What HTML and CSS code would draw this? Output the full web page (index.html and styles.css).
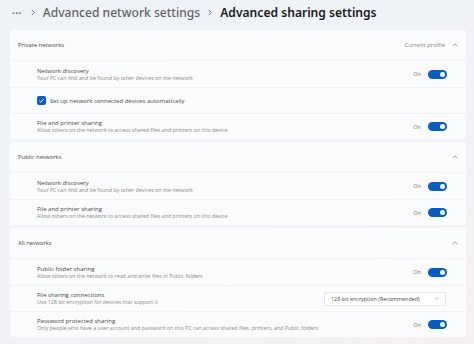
FILE: index.html
```html
<!DOCTYPE html>
<html lang="en">
<head>
    <meta charset="UTF-8">
    <meta name="viewport" content="width=device-width, initial-scale=1.0">
    <title>Advanced sharing settings</title>
    <link rel="stylesheet" href="styles.css">
</head>
<body>
    <header class="breadcrumb">
        <span class="more">···</span>
        <svg class="sep" viewBox="0 0 4 7"><path d="M0.8 0.8 L3.2 3.5 L0.8 6.2"/></svg>
        <span class="crumb">Advanced network settings</span>
        <svg class="sep" viewBox="0 0 4 7"><path d="M0.8 0.8 L3.2 3.5 L0.8 6.2"/></svg>
        <span class="crumb current">Advanced sharing settings</span>
    </header>

    <main class="groups">
        <section class="group">
            <div class="group-header">
                <span>Private networks</span>
                <span class="header-right">
                    <span class="profile">Current profile</span>
                    <svg class="chevron" viewBox="0 0 7 4"><path d="M0.7 3.3 L3.5 0.7 L6.3 3.3"/></svg>
                </span>
            </div>
            <div class="row tall">
                <div class="row-text">
                    <div class="title">Network discovery</div>
                    <div class="desc">Your PC can find and be found by other devices on the network</div>
                </div>
                <div class="switch"><span class="state">On</span><span class="toggle"></span></div>
            </div>
            <div class="row">
                <label class="check">
                    <span class="box"><svg viewBox="0 0 9 9"><path d="M2.2 4.6 L3.8 6.2 L6.9 2.9"/></svg></span>
                    <span>Set up network connected devices automatically</span>
                </label>
            </div>
            <div class="row">
                <div class="row-text">
                    <div class="title">File and printer sharing</div>
                    <div class="desc">Allow others on the network to access shared files and printers on this device</div>
                </div>
                <div class="switch"><span class="state">On</span><span class="toggle"></span></div>
            </div>
        </section>

        <section class="group">
            <div class="group-header">
                <span>Public networks</span>
                <span class="header-right">
                    <svg class="chevron" viewBox="0 0 7 4"><path d="M0.7 3.3 L3.5 0.7 L6.3 3.3"/></svg>
                </span>
            </div>
            <div class="row tall">
                <div class="row-text">
                    <div class="title">Network discovery</div>
                    <div class="desc">Your PC can find and be found by other devices on the network</div>
                </div>
                <div class="switch"><span class="state">On</span><span class="toggle"></span></div>
            </div>
            <div class="row">
                <div class="row-text">
                    <div class="title">File and printer sharing</div>
                    <div class="desc">Allow others on the network to access shared files and printers on this device</div>
                </div>
                <div class="switch"><span class="state">On</span><span class="toggle"></span></div>
            </div>
        </section>

        <section class="group">
            <div class="group-header">
                <span>All networks</span>
                <span class="header-right">
                    <svg class="chevron" viewBox="0 0 7 4"><path d="M0.7 3.3 L3.5 0.7 L6.3 3.3"/></svg>
                </span>
            </div>
            <div class="row tall">
                <div class="row-text">
                    <div class="title">Public folder sharing</div>
                    <div class="desc">Allow others on the network to read and write files in Public folders</div>
                </div>
                <div class="switch"><span class="state">On</span><span class="toggle"></span></div>
            </div>
            <div class="row">
                <div class="row-text">
                    <div class="title">File sharing connections</div>
                    <div class="desc">Use 128-bit encryption for devices that support it</div>
                </div>
                <div class="dropdown">
                    <span>128-bit encryption (Recommended)</span>
                    <svg viewBox="0 0 6 4"><path d="M0.7 0.8 L3 3 L5.3 0.8"/></svg>
                </div>
            </div>
            <div class="row">
                <div class="row-text">
                    <div class="title">Password protected sharing</div>
                    <div class="desc">Only people who have a user account and password on this PC can access shared files, printers, and Public folders</div>
                </div>
                <div class="switch"><span class="state">On</span><span class="toggle"></span></div>
            </div>
        </section>
    </main>
</body>
</html>
```

FILE: styles.css
```css
body {
    margin: 0;
    height: 344px;
    font-family: 'Open Sans', 'Noto Sans', sans-serif;
    background: linear-gradient(160deg, #eef2f7 0%, #f0f2f6 60%, #f5f0f2 100%);
    color: #1b1b1b;
    overflow: hidden;
}

.breadcrumb {
    display: flex;
    align-items: center;
    height: 25px;
    padding-left: 12px;
    font-family: 'Noto Sans', sans-serif;
    font-size: 12.1px;
    font-weight: 600;
}

.more {
    color: #5d5d5d;
    font-size: 10px;
    letter-spacing: 0.5px;
    margin-right: 9px;
}

.sep {
    width: 4px;
    height: 7px;
    margin-right: 8px;
    fill: none;
    stroke: #6b6b6b;
    stroke-width: 0.9;
}

.crumb {
    color: #666;
    font-weight: 500;
    margin-right: 8px;
}

.crumb.current {
    color: #1b1b1b;
    font-weight: 600;
}

.groups {
    display: flex;
    flex-direction: column;
    gap: 3px;
    margin: 5px 8px 0 10px;
}

.group {
    display: flex;
    flex-direction: column;
    gap: 1px;
}

.group-header {
    display: flex;
    justify-content: space-between;
    align-items: center;
    height: 30px;
    padding: 0 8px 0 8px;
    background-color: #fafbfc;
    border-radius: 3px 3px 0 0;
    font-size: 5.9px;
    color: #4a4a4a;
}

.header-right {
    display: flex;
    align-items: center;
    gap: 7px;
}

.profile {
    color: #858585;
}

.chevron {
    width: 6px;
    height: 4px;
    fill: none;
    stroke: #777;
    stroke-width: 0.8;
}

.row {
    display: flex;
    justify-content: space-between;
    align-items: center;
    height: 25px;
    padding: 0 19px 0 27px;
    background-color: #fafbfc;
}

.row.tall {
    height: 26px;
}

.group .row:last-child {
    border-radius: 0 0 3px 3px;
}

.title {
    font-size: 6px;
    line-height: 8px;
    color: #484848;
}

.desc {
    font-size: 5.3px;
    line-height: 7px;
    color: #8a8a8a;
}

.switch {
    display: flex;
    align-items: center;
    gap: 7px;
}

.state {
    font-size: 5.5px;
    color: #777;
}

.toggle {
    position: relative;
    width: 19px;
    height: 9px;
    border-radius: 5px;
    background-color: #0b5cc0;
}

.toggle::after {
    content: "";
    position: absolute;
    right: 2px;
    top: 2px;
    width: 5px;
    height: 5px;
    border-radius: 50%;
    background-color: #fff;
}

.check {
    display: flex;
    align-items: center;
    gap: 4px;
    font-size: 6px;
    color: #484848;
}

.box {
    display: flex;
    width: 9px;
    height: 9px;
    border-radius: 2px;
    background-color: #0b5cc0;
}

.box svg {
    width: 9px;
    height: 9px;
    fill: none;
    stroke: #fff;
    stroke-width: 0.9;
}

.dropdown {
    display: flex;
    justify-content: space-between;
    align-items: center;
    box-sizing: border-box;
    width: 122px;
    height: 14px;
    padding: 0 6px 0 6px;
    margin-right: 1px;
    background-color: #fff;
    border: 1px solid #e6e6e6;
    border-radius: 2px;
    font-size: 5.4px;
    color: #484848;
}

.dropdown svg {
    width: 5px;
    height: 3px;
    fill: none;
    stroke: #888;
    stroke-width: 0.8;
}
```
